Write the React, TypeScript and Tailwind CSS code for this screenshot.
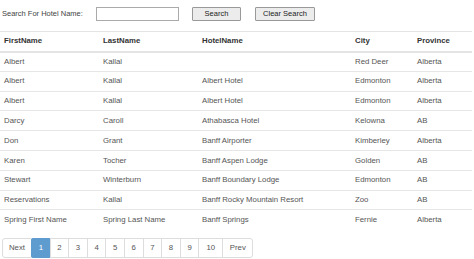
import { useState } from 'react';

type Row = { first: string; last: string; hotel: string; city: string; province: string };

const ROWS: Row[] = [
  { first: 'Albert', last: 'Kallal', hotel: '', city: 'Red Deer', province: 'Alberta' },
  { first: 'Albert', last: 'Kallal', hotel: 'Albert Hotel', city: 'Edmonton', province: 'Alberta' },
  { first: 'Albert', last: 'Kallal', hotel: 'Albert Hotel', city: 'Edmonton', province: 'Alberta' },
  { first: 'Darcy', last: 'Caroll', hotel: 'Athabasca Hotel', city: 'Kelowna', province: 'AB' },
  { first: 'Don', last: 'Grant', hotel: 'Banff Airporter', city: 'Kimberley', province: 'Alberta' },
  { first: 'Karen', last: 'Tocher', hotel: 'Banff Aspen Lodge', city: 'Golden', province: 'AB' },
  { first: 'Stewart', last: 'Winterburn', hotel: 'Banff Boundary Lodge', city: 'Edmonton', province: 'AB' },
  { first: 'Reservations', last: 'Kallal', hotel: 'Banff Rocky Mountain Resort', city: 'Zoo', province: 'AB' },
  { first: 'Spring First Name', last: 'Spring Last Name', hotel: 'Banff Springs', city: 'Fernie', province: 'Alberta' },
];

const PAGES = ['1', '2', '3', '4', '5', '6', '7', '8', '9', '10'];

export default function App() {
  const [query, setQuery] = useState('');
  const [page, setPage] = useState('1');

  return (
    <div className="h-[259px] w-[474px] overflow-hidden bg-white text-[#555]" style={{ fontFamily: '"Liberation Sans", Arial, sans-serif' }}>
      <div className="flex h-[31px] items-center pb-[3px] pl-[2px] text-[7.5px] text-[#444]">
        <span className="w-[94px]">Search For Hotel Name:</span>
        <input
          value={query}
          onChange={(e) => setQuery(e.target.value)}
          className="h-[14px] w-[83px] border border-[#aaa] bg-white px-1 text-[7.5px] outline-none"
        />
        <button type="button" className="ml-[13px] h-[14px] w-[49px] rounded-[1px] border border-[#999] bg-[#ececec] text-[7.5px] text-[#222]">
          Search
        </button>
        <button type="button" className="ml-[14px] h-[14px] w-[60px] rounded-[1px] border border-[#999] bg-[#ececec] text-[7.5px] text-[#222]">
          Clear Search
        </button>
      </div>

      <table className="w-[472px] border-collapse text-left text-[7.8px]">
        <thead>
          <tr className="h-[20px] border-t border-b-2 border-[#e4e4e4] text-[#333]">
            <th className="w-[99px] pl-[4px] font-semibold">FirstName</th>
            <th className="w-[99px] pl-[4px] font-semibold">LastName</th>
            <th className="w-[153px] pl-[4px] font-semibold">HotelName</th>
            <th className="w-[62px] pl-[4px] font-semibold">City</th>
            <th className="pl-[4px] font-semibold">Province</th>
          </tr>
        </thead>
        <tbody>
          {ROWS.map((r, i) => (
            <tr key={i} className="h-[19.8px] border-t border-[#e6e6e6]">
              <td className="pl-[4px]">{r.first}</td>
              <td className="pl-[4px]">{r.last}</td>
              <td className="pl-[4px]">{r.hotel}</td>
              <td className="pl-[4px]">{r.city}</td>
              <td className="pl-[4px]">{r.province}</td>
            </tr>
          ))}
        </tbody>
      </table>

      <div className="mt-[8px] flex pl-[2px] text-[7.8px] text-[#555]">
        <button type="button" className="flex h-[20px] w-[30px] items-center justify-center rounded-l-[3px] border border-[#ddd] bg-white">
          Next
        </button>
        {PAGES.map((p) => (
          <button
            key={p}
            type="button"
            onClick={() => setPage(p)}
            className={
              p === page
                ? 'ml-[-1px] flex h-[20px] w-[19.6px] items-center justify-center rounded-[2px] border border-[#5e9ccf] bg-[#5e9ccf] text-white'
                : p === '10'
                  ? 'ml-[-1px] flex h-[20px] w-[25px] items-center justify-center border border-[#ddd] bg-white'
                  : 'ml-[-1px] flex h-[20px] w-[19.6px] items-center justify-center border border-[#ddd] bg-white'
            }
          >
            {p}
          </button>
        ))}
        <button type="button" className="ml-[-1px] flex h-[20px] w-[31px] items-center justify-center rounded-r-[3px] border border-[#ddd] bg-white">
          Prev
        </button>
      </div>
    </div>
  );
}
